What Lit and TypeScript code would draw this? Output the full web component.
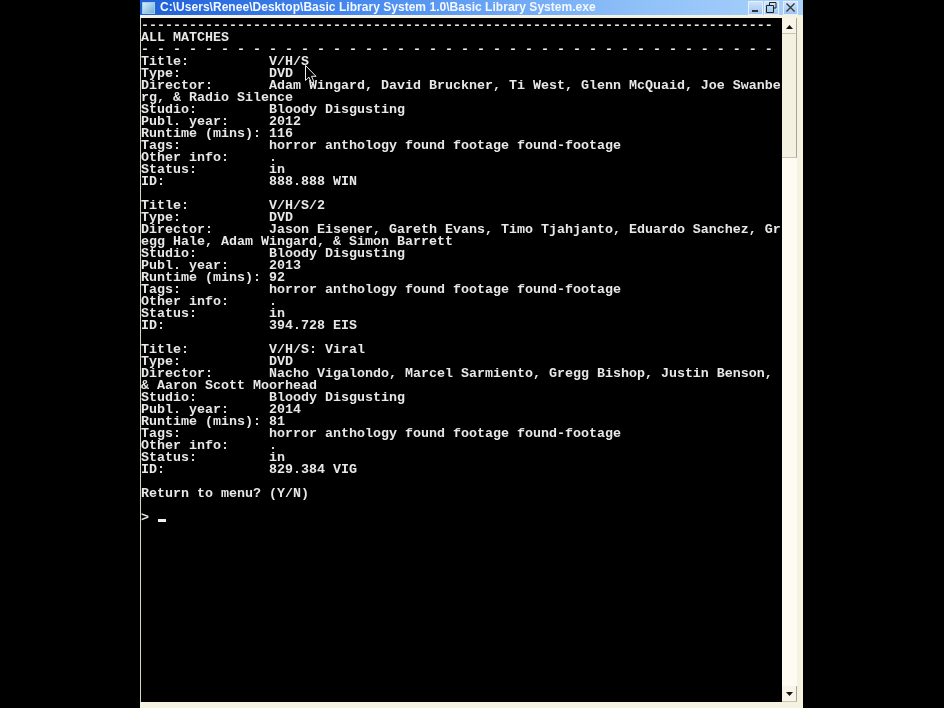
import { LitElement, html, css, svg } from "lit";
import { customElement } from "lit/decorators.js";

const dash = "-".repeat(79);
const gap = "- ".repeat(40).trimEnd();
const common = (t: string, d: string, dir: string, dir2: string, y: string, r: string, id: string) =>
  [
    `Title:          ${t}`,
    `Type:           ${d}`,
    `Director:       ${dir}`,
    dir2,
    `Studio:         Bloody Disgusting`,
    `Publ. year:     ${y}`,
    `Runtime (mins): ${r}`,
    `Tags:           horror anthology found footage found-footage`,
    `Other info:     .`,
    `Status:         in`,
    `ID:             ${id}`,
    ``,
  ].join("\n");

const text =
  [dash, "ALL MATCHES", gap, ""].join("\n") +
  common("V/H/S", "DVD", "Adam Wingard, David Bruckner, Ti West, Glenn McQuaid, Joe Swanbe", "rg, & Radio Silence", "2012", "116", "888.888 WIN") +
  "\n" +
  common("V/H/S/2", "DVD", "Jason Eisener, Gareth Evans, Timo Tjahjanto, Eduardo Sanchez, Gr", "egg Hale, Adam Wingard, & Simon Barrett", "2013", "92", "394.728 EIS") +
  "\n" +
  common("V/H/S: Viral", "DVD", "Nacho Vigalondo, Marcel Sarmiento, Gregg Bishop, Justin Benson,", "& Aaron Scott Moorhead", "2014", "81", "829.384 VIG") +
  "\nReturn to menu? (Y/N)\n\n> ";

@customElement("app-root")
export class AppRoot extends LitElement {
  static styles = css`
    :host { display: block; width: 944px; height: 708px; background: #000; overflow: hidden; }
    .desk { position: relative; width: 944px; height: 708px; display: flex; padding-left: 140px; box-sizing: border-box; }
    .win { width: 663px; height: 708px; display: flex; flex-direction: column; background: #f6f2e2; }
    .title {
      height: 15px; flex: none; display: flex; align-items: center; gap: 5px; padding: 0 2px;
      background: linear-gradient(90deg, #1f5fd8 0%, #4a8cf0 35%, #8fc0f8 75%, #a9d2fb 100%);
    }
    .app-ico { width: 13px; height: 12px; flex: none; background: linear-gradient(135deg, #d8eef8, #6fb0d8); border: 1px solid #9fd0e8; box-sizing: border-box; }
    .ttl { flex: 1; color: #f4f8ff; font: bold 12px/15px "Liberation Sans", Arial, sans-serif; white-space: nowrap; letter-spacing: 0.03px; filter: blur(0.35px); }
    .btns { display: flex; margin-right: 3px; }
    .btn { width: 15px; height: 14px; background: linear-gradient(#cfe4fb, #9cc4f0); border: 1px solid #e6f0fb; box-sizing: border-box; display: flex; align-items: center; justify-content: center; }
    .btn + .btn { margin-left: 1px; }
    .btn.close { margin-left: 4px; }
    .btn svg { width: 11px; height: 11px; display: block; }
    .body { flex: 1; min-height: 0; display: flex; flex-direction: column; }
    .strip { height: 3px; flex: none; background: #f6f2e2; }
    .main { height: 684px; flex: none; display: flex; }
    .console {
      width: 642px; flex: none; box-sizing: border-box; background: #000;
      border-left: 1px solid #d8d4c8; padding: 2px 0 0 0; overflow: hidden;
    }
    pre {
      margin: 0; color: #e8e8e8; white-space: pre; filter: blur(0.3px);
      font: bold 13.333px/12px "Liberation Mono", "Courier New", monospace;
    }
    .cur { display: inline-block; width: 8px; height: 3px; background: #f0f0f0; vertical-align: -1px; margin-left: 1px; }
    .sb { width: 15px; flex: none; display: flex; flex-direction: column; background: #fdfbf2; }
    .arrow { height: 16px; flex: none; display: flex; align-items: center; justify-content: center; background: #f8f5e8; border-right: 1px solid #a8a498; border-bottom: 1px solid #c8c4b4; box-sizing: border-box; }
    .arrow.up { padding-top: 3px; }
    .arrow svg { width: 7px; height: 4px; display: block; }
    .thumb { height: 124px; flex: none; background: #f5f1e0; border-right: 1px solid #a8a498; border-bottom: 1px solid #c8c4b4; box-sizing: border-box; }
    .track { flex: 1; }
    .cursor { position: absolute; left: 305px; top: 65px; width: 12px; height: 19px; }
  `;

  render() {
    return html`<div class="desk">
      <div class="win">
        <div class="title">
          <div class="app-ico"></div>
          <div class="ttl">C:\\Users\\Renee\\Desktop\\Basic Library System 1.0\\Basic Library System.exe</div>
          <div class="btns">
            <div class="btn"><svg viewBox="0 0 11 11">${svg`<rect x="2" y="8" width="6" height="2" fill="#333"/>`}</svg></div>
            <div class="btn"><svg viewBox="0 0 11 11">${svg`<path d="M3.5 3V.5h6.5V6H8M.5 3.5H7.5V10.5H.5Z" fill="none" stroke="#222"/>`}</svg></div>
            <div class="btn close"><svg viewBox="0 0 11 11">${svg`<path d="M1.5 1.5l8 8M9.5 1.5l-8 8" stroke="#333" stroke-width="1.3"/>`}</svg></div>
          </div>
        </div>
        <div class="body">
          <div class="strip"></div>
          <div class="main">
            <div class="console"><pre>${text}<span class="cur"></span></pre></div>
            <div class="sb">
              <div class="arrow up"><svg viewBox="0 0 7 4">${svg`<path d="M3.5 0L7 4H0Z" fill="#111"/>`}</svg></div>
              <div class="thumb"></div>
              <div class="track"></div>
              <div class="arrow"><svg viewBox="0 0 7 4">${svg`<path d="M0 0H7L3.5 4Z" fill="#111"/>`}</svg></div>
            </div>
          </div>
        </div>
      </div>
      <svg class="cursor" viewBox="0 0 12 19">${svg`<path d="M.5.5V15.5L4 12.2 6.5 18 9 17 6.5 11.3H11Z" fill="#000" stroke="#eee"/>`}</svg>
    </div>`;
  }
}
